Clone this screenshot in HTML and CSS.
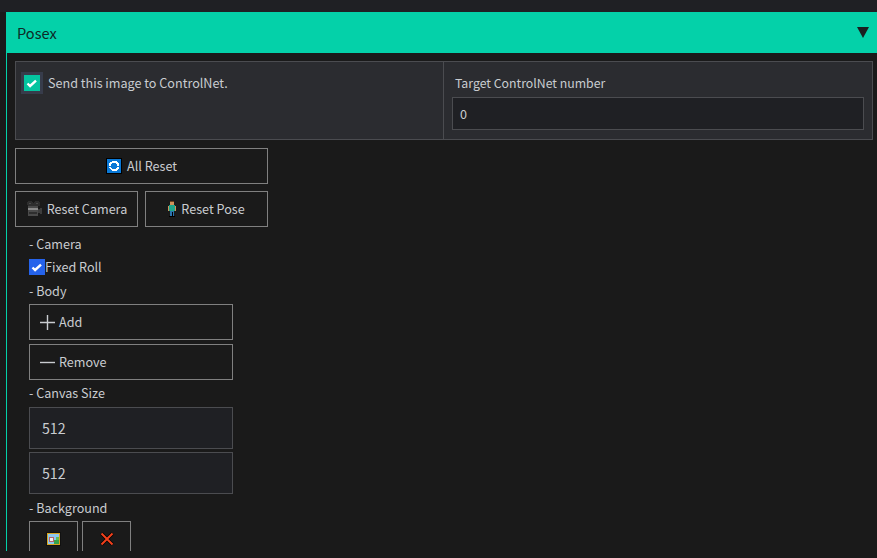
FILE: index.html
```html
<!DOCTYPE html>
<html lang="en">
<head>
    <meta charset="UTF-8">
    <title>Posex</title>
    <link rel="stylesheet" href="styles.css">
</head>
<body>
<section class="panel">
    <div class="panel-head">
        <span>Posex</span>
        <span class="arrow"></span>
    </div>
    <div class="panel-body">
        <div class="send-box">
            <label class="send-cell">
                <span class="send-check">
                    <svg viewBox="0 0 16 16" width="16" height="16"><path d="M3.5 8.5l2.6 2.5L12 5.6" fill="none" stroke="#fff" stroke-width="2.4"/></svg>
                </span>
                Send this image to ControlNet.
            </label>
            <div class="target-cell">
                <div class="target-label">Target ControlNet number</div>
                <div class="field target-field">0</div>
            </div>
        </div>

        <div class="btn btn-wide">
            <svg class="ico" viewBox="0 0 16 16" width="16" height="16" shape-rendering="crispEdges">
                <rect width="16" height="16" fill="#000"/>
                <rect x="1" y="1" width="14" height="14" fill="#0a78d6"/>
                <path d="M6 3h5v1h1v1h1v3h-2V6h-1V5H6v1H5v2H3V5h1V4h2zM3 9h2v1h1v1h4v-1h1V9h2v2h-1v1h-1v1H6v-1H5v-1H4v-1H3z" fill="#fff"/>
            </svg>
            All Reset
        </div>
        <div class="btn-row">
            <div class="btn">
                <svg class="ico" viewBox="0 0 16 16" width="16" height="16" shape-rendering="crispEdges">
                    <path d="M2 0h4v1h1v1h1V1h1V0h4v1h1v4H2V4H1V1h1z" fill="#2e2e2e"/>
                    <path d="M3 2h2v1H3zM10 2h2v1h-2z" fill="#4a4a4a"/>
                    <rect x="2" y="5" width="10" height="10" fill="#4a4a4a"/>
                    <rect x="2" y="7" width="10" height="2" fill="#8c8c8c"/>
                    <rect x="3" y="11" width="8" height="2" fill="#2e2e2e"/>
                    <path d="M12 8h2V7h2v6h-2v-1h-2z" fill="#3d3d3d"/>
                </svg>
                Reset Camera
            </div>
            <div class="btn">
                <svg class="ico" viewBox="0 0 8 16" width="8" height="16" shape-rendering="crispEdges">
                    <rect x="2" y="0" width="4" height="4" fill="#d0925a"/>
                    <rect x="2" y="0" width="4" height="1" fill="#6b3f1c"/>
                    <rect x="1" y="4" width="6" height="6" fill="#1fa58a"/>
                    <rect x="0" y="5" width="1" height="5" fill="#d0925a"/>
                    <rect x="7" y="5" width="1" height="5" fill="#d0925a"/>
                    <rect x="2" y="10" width="4" height="5" fill="#2b73ad"/>
                    <rect x="4" y="11" width="1" height="4" fill="#000"/>
                    <rect x="1" y="15" width="6" height="1" fill="#000"/>
                </svg>
                Reset Pose
            </div>
        </div>

        <div class="tools">
            <div class="tool-label tool-label-first">- Camera</div>
            <label class="roll">
                <span class="roll-check">
                    <svg viewBox="0 0 16 16" width="16" height="16"><path d="M3.5 8.5l2.6 2.5L12 5.6" fill="none" stroke="#fff" stroke-width="2.4"/></svg>
                </span>Fixed Roll
            </label>
            <div class="tool-label">- Body</div>
            <div class="btn btn-tool">
                <svg class="ico-line" viewBox="0 0 15 15" width="15" height="15"><path d="M0 7.5h15M7.5 0v15" stroke="#c9ccd0" stroke-width="1.4"/></svg>
                Add
            </div>
            <div class="btn btn-tool btn-tool-next">
                <svg class="ico-line" viewBox="0 0 15 15" width="15" height="15"><path d="M0 7.5h15" stroke="#c9ccd0" stroke-width="1.4"/></svg>
                Remove
            </div>
            <div class="tool-label">- Canvas Size</div>
            <div class="field size-field">512</div>
            <div class="field size-field size-field-next">512</div>
            <div class="tool-label tool-label-bg">- Background</div>
            <div class="bg-row">
                <div class="btn btn-icon">
                    <svg viewBox="0 0 15 14" width="15" height="14" shape-rendering="crispEdges">
                        <rect width="15" height="14" fill="#111"/>
                        <rect x="1" y="1" width="13" height="12" fill="#d9a520"/>
                        <rect x="2" y="2" width="11" height="10" fill="#8ec8ee"/>
                        <rect x="3" y="5" width="5" height="5" fill="#b9646a"/>
                        <rect x="4" y="6" width="3" height="3" fill="#eee"/>
                        <rect x="8" y="8" width="5" height="4" fill="#37a34a"/>
                        <rect x="10" y="5" width="3" height="3" fill="#5cbf5c"/>
                    </svg>
                </div>
                <div class="btn btn-icon">
                    <svg viewBox="0 0 14 14" width="14" height="14"><path d="M1.5 1.5l11 11M12.5 1.5l-11 11" stroke="#000" stroke-width="3.4"/><path d="M1.5 1.5l11 11M12.5 1.5l-11 11" stroke="#f0401c" stroke-width="2"/></svg>
                </div>
            </div>
        </div>
    </div>
</section>
</body>
</html>
```

FILE: styles.css
```css
*{margin:0;padding:0;box-sizing:border-box}
html,body{height:100%;overflow:hidden}
body{
    background:#1a1a1a;
    color:#c9ccd0;
    font-family:"Noto Sans CJK JP","Noto Sans CJK SC","Liberation Sans",sans-serif;
    font-size:12.6px;
    line-height:20px;
    padding-top:12px;
    background-image:linear-gradient(#1f2024 12px,#1a1a1a 12px);
}
.panel{
    margin-left:6px;
    height:539px;
    overflow:hidden;
    border-left:1px solid #04d1a9;
}
.panel-head{
    height:41px;
    margin-left:-1px;
    padding:0 8px 0 11px;
    background:#04d1a9;
    color:#0d2b27;
    font-size:14.6px;
    display:flex;
    align-items:center;
    justify-content:space-between;
}
.arrow{
    width:0;
    height:0;
    border-left:6.5px solid transparent;
    border-right:6.5px solid transparent;
    border-top:11px solid #1a1f20;
}
.panel-body{padding:8px 4px 0 8px}
/*send to controlnet*/
.send-box{
    display:flex;
    height:79px;
    background:#2b2c30;
    border:1px solid #4b4c50;
}
.send-cell{
    width:428px;
    padding:10px 0 0 5px;
    display:flex;
    align-items:flex-start;
    gap:5px;
    border-right:1px solid #4b4c50;
    line-height:22px;
}
.send-check{
    width:22px;
    height:22px;
    padding:3px;
    background:#373c4b;
    flex:none;
}
.send-check svg{display:block;background:#04c4a0}
.target-cell{flex:1;padding:11px 8px 0}
.target-label{padding-left:3px;height:24px;font-size:12.3px}
.field{
    background:#1f2024;
    border:1px solid #4b4c50;
    display:flex;
    align-items:center;
}
.target-field{height:33px;padding-left:7px}
/*buttons*/
.btn{
    border:1px solid #808080;
    display:flex;
    align-items:center;
    justify-content:center;
    gap:5px;
    width:123px;
    height:36px;
}
.btn-wide{width:253px;margin-top:8px}
.btn-row{display:flex;gap:7px;margin-top:7px}
.ico{flex:none}
.tools{padding-left:14px}
.tool-label{height:20px;line-height:20px;margin-top:4px}
.tool-label-first{margin-top:7px}
.roll{display:flex;align-items:center;height:20px;margin-top:3px}
.roll-check{width:16px;height:16px;background:#2563eb;flex:none}
.roll-check svg{display:block}
.btn-tool{
    width:204px;
    margin-top:3px;
    justify-content:flex-start;
    padding-left:10px;
    gap:4px;
}
.btn-tool-next{margin-top:4px}
.btn-tool + .tool-label{margin-top:3px}
.size-field{
    width:204px;
    height:42px;
    padding-left:12px;
    font-size:14.2px;
    margin-top:4px;
}
.size-field-next{margin-top:3px}
.tool-label-bg{margin-top:4px}
.bg-row{display:flex;gap:4px;margin-top:3px}
.btn-icon{width:49px;height:36px}
```
